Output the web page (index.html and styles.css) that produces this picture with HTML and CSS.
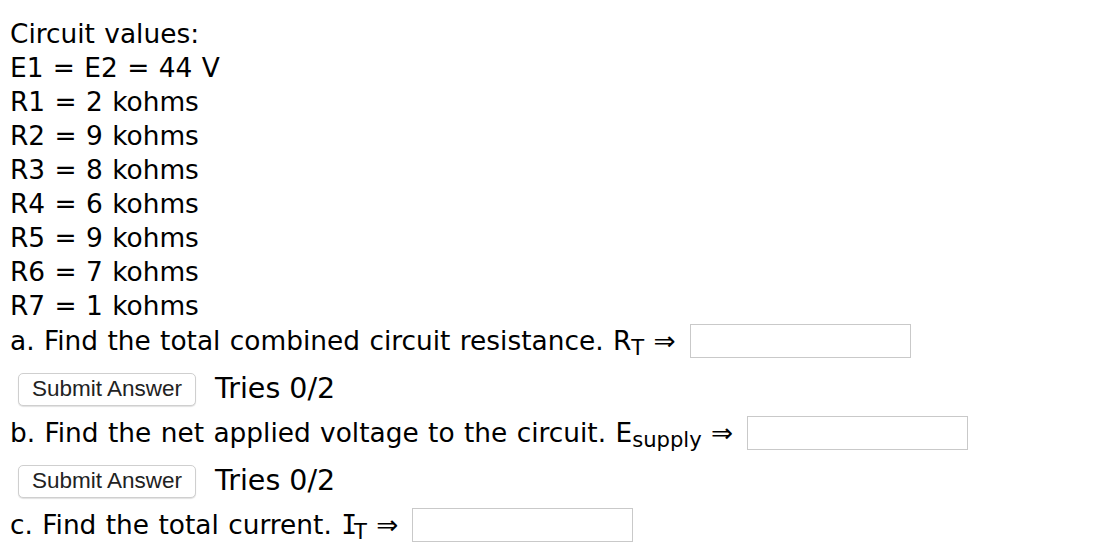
FILE: index.html
```html
<!DOCTYPE html>
<html>
<head>
<meta charset="utf-8">
<link rel="stylesheet" href="styles.css">
</head>
<body>
<div class="page">
  <div class="values">
    <div class="line">Circuit values:</div>
    <div class="line">E1 = E2 = 44 V</div>
    <div class="line">R1 = 2 kohms</div>
    <div class="line">R2 = 9 kohms</div>
    <div class="line">R3 = 8 kohms</div>
    <div class="line">R4 = 6 kohms</div>
    <div class="line">R5 = 9 kohms</div>
    <div class="line">R6 = 7 kohms</div>
    <div class="line">R7 = 1 kohms</div>
  </div>

  <div class="question">
    <span class="qtext">a. Find the total combined circuit resistance. R<sub>T</sub> <span class="arrow">⇒</span></span>
    <input class="answer" type="text">
  </div>
  <div class="actions">
    <button class="submit">Submit Answer</button>
    <span class="tries">Tries 0/2</span>
  </div>

  <div class="question">
    <span class="qtext">b. Find the net applied voltage to the circuit. E<sub>supply</sub> <span class="arrow">⇒</span></span>
    <input class="answer" type="text">
  </div>
  <div class="actions">
    <button class="submit">Submit Answer</button>
    <span class="tries">Tries 0/2</span>
  </div>

  <div class="question">
    <span class="qtext">c. Find the total current. <span class="serif-i">I</span><sub>T</sub> <span class="arrow">⇒</span></span>
    <input class="answer" type="text">
  </div>
  <div class="actions">
    <button class="submit">Submit Answer</button>
    <span class="tries">Tries 0/2</span>
  </div>
</div>
</body>
</html>
```

FILE: styles.css
```css
html, body {
  margin: 0;
  padding: 0;
  background: #ffffff;
}
.page {
  padding: 17px 0 0 10px;
  font-family: "DejaVu Sans", Verdana, sans-serif;
  font-size: 26.4px;
  word-spacing: 1px;
  color: #000;
}
.line {
  line-height: 34px;
  height: 34px;
  white-space: nowrap;
}
.question {
  display: flex;
  align-items: center;
  height: 36px;
  white-space: nowrap;
}
.qtext {
  line-height: 34px;
}
.qtext sub {
  font-size: 0.8em;
  vertical-align: -0.22em;
  line-height: 0;
}
.serif-i {
  font-family: "DejaVu Sans Mono", monospace;
  letter-spacing: -3px;
}
.arrow {
  font-size: 1em;
}
.answer {
  box-sizing: border-box;
  width: 221px;
  height: 34px;
  margin: 0 0 0 14px;
  border: 1px solid #c9c9c9;
  background: #fff;
  padding: 0;
}
.actions {
  display: flex;
  align-items: center;
  gap: 19px;
  margin: 13px 0 9px 8px;
  word-spacing: 0;
}
.submit {
  box-sizing: border-box;
  height: 33px;
  width: 178px;
  padding: 0;
  font-family: "Liberation Sans", Arial, sans-serif;
  font-size: 22.5px;
  color: #222;
  background: #fff;
  border: 1px solid #cfcfcf;
  border-radius: 5px;
  box-shadow: 0 1px 1px rgba(0,0,0,0.12);
}
.tries {
  font-size: 28.5px;
  line-height: 34px;
}
```
